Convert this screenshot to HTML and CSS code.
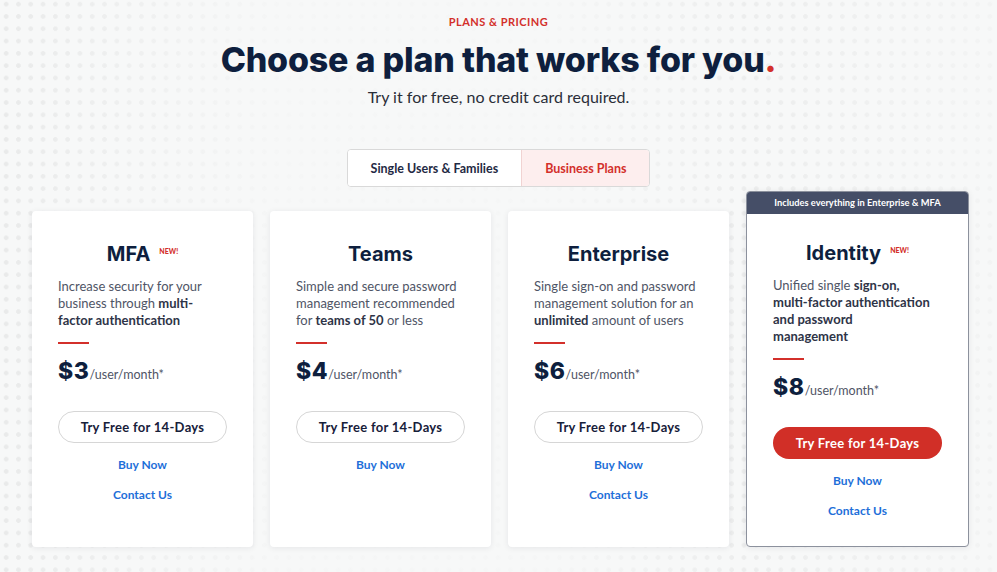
FILE: index.html
```html
<!DOCTYPE html>
<html lang="en">
<head>
<meta charset="utf-8">
<title>Plans &amp; Pricing</title>
<link rel="stylesheet" href="styles.css">
</head>
<body>
<main class="page">
  <header class="hero">
    <p class="eyebrow">PLANS &amp; PRICING</p>
    <h1 class="title">Choose a plan that works for you<span class="dot">.</span></h1>
    <p class="subtitle">Try it for free, no credit card required.</p>
    <div class="toggle">
      <button class="seg">Single Users &amp; Families</button>
      <button class="seg seg-active">Business Plans</button>
    </div>
  </header>

  <section class="plans">
    <article class="card card-plain">
      <div class="card-body">
        <div class="plan-head"><h2 class="plan-name">MFA</h2><span class="badge">NEW!</span></div>
        <p class="desc">Increase security for your<br>business through <b>multi-<br>factor authentication</b></p>
        <hr class="rule">
        <p class="price"><span class="amount">$3</span><span class="per">/user/month*</span></p>
        <a class="btn btn-outline" href="#">Try Free for 14-Days</a>
        <a class="link" href="#">Buy Now</a>
        <a class="link" href="#">Contact Us</a>
      </div>
    </article>

    <article class="card card-plain">
      <div class="card-body">
        <div class="plan-head"><h2 class="plan-name">Teams</h2></div>
        <p class="desc">Simple and secure password<br>management recommended<br>for <b>teams of 50</b> or less</p>
        <hr class="rule">
        <p class="price"><span class="amount">$4</span><span class="per">/user/month*</span></p>
        <a class="btn btn-outline" href="#">Try Free for 14-Days</a>
        <a class="link" href="#">Buy Now</a>
      </div>
    </article>

    <article class="card card-plain">
      <div class="card-body">
        <div class="plan-head"><h2 class="plan-name">Enterprise</h2></div>
        <p class="desc">Single sign-on and password<br>management solution for an<br><b>unlimited</b> amount of users</p>
        <hr class="rule">
        <p class="price"><span class="amount">$6</span><span class="per">/user/month*</span></p>
        <a class="btn btn-outline" href="#">Try Free for 14-Days</a>
        <a class="link" href="#">Buy Now</a>
        <a class="link" href="#">Contact Us</a>
      </div>
    </article>

    <article class="card card-featured">
      <div class="banner">Includes everything in Enterprise &amp; MFA</div>
      <div class="card-body">
        <div class="plan-head"><h2 class="plan-name">Identity</h2><span class="badge">NEW!</span></div>
        <p class="desc">Unified single <b>sign-on,<br>multi-factor authentication<br>and password<br>management</b></p>
        <hr class="rule">
        <p class="price"><span class="amount">$8</span><span class="per">/user/month*</span></p>
        <a class="btn btn-red" href="#">Try Free for 14-Days</a>
        <a class="link" href="#">Buy Now</a>
        <a class="link" href="#">Contact Us</a>
      </div>
    </article>
  </section>
</main>
</body>
</html>
```

FILE: styles.css
```css
* { box-sizing: border-box; }

html, body { margin: 0; padding: 0; }

body {
  width: 997px;
  height: 572px;
  overflow: hidden;
  font-family: "Lato", "Liberation Sans", sans-serif;
  color: #0f1f3d;
  background-color: #f7f8f8;
  background-image:
    linear-gradient(to right, rgba(247,248,248,0) 0%, rgba(247,248,248,0.85) 28%, rgba(247,248,248,0.85) 55%, rgba(247,248,248,0.2) 75%, rgba(247,248,248,0.7) 100%),
    radial-gradient(circle at center, #e9eaea 0, #e9eaea 2px, rgba(233,234,234,0) 2.6px);
  background-size: 100% 100%, 12.3px 12.3px;
  background-position: 0 0, 0 -2px;
}

.page {
  display: flex;
  flex-direction: column;
  padding-top: 15px;
}

.hero {
  display: flex;
  flex-direction: column;
  align-items: center;
}

.eyebrow {
  margin: 0;
  font-size: 11px;
  line-height: 14px;
  font-weight: 700;
  letter-spacing: 0.5px;
  color: #d3302b;
}

.title {
  margin: 10px 0 0;
  font-family: "Inter", "Lato", sans-serif;
  font-size: 34px;
  line-height: 42px;
  font-weight: 800;
  letter-spacing: -0.2px;
  color: #0e1f3e;
}

.dot { color: #d3302b; }

.subtitle {
  margin: 6px 0 0;
  font-size: 16px;
  line-height: 20px;
  color: #2a2e38;
}

.toggle {
  display: flex;
  margin-top: 42px;
  border: 1px solid #d9d9d9;
  border-radius: 4px;
  background: #fff;
  overflow: hidden;
}

.seg {
  height: 36px;
  padding: 0 23px;
  border: 0;
  background: #fff;
  font-family: "Lato", sans-serif;
  font-size: 12.5px;
  font-weight: 700;
  color: #1f2a44;
}

.seg-active {
  background: #fdeeee;
  color: #d3302b;
  border-left: 1px solid #f1d3d2;
}

.plans {
  display: grid;
  grid-template-columns: 221px 221px 221px 223px;
  column-gap: 17px;
  align-items: stretch;
  margin: 4px 0 0 32px;
}

.card {
  display: flex;
  flex-direction: column;
  background: #fff;
  border-radius: 4px;
}

.card-plain {
  margin-top: 20px;
  box-shadow: 0 1px 6px rgba(20, 30, 50, 0.08);
}

.card-featured {
  border: 1px solid #8c919d;
  overflow: hidden;
  box-shadow: 0 1px 6px rgba(20, 30, 50, 0.08);
}

.banner {
  height: 22px;
  background: #454e67;
  color: #fff;
  font-size: 9.3px;
  font-weight: 700;
  line-height: 22px;
  text-align: center;
}

.card-body {
  display: flex;
  flex-direction: column;
  padding: 31px 26px 28px;
}

.card-featured .card-body { padding: 27px 26px 27px; }

.plan-head {
  display: flex;
  justify-content: center;
  align-items: flex-start;
}

.plan-name {
  margin: 0;
  font-family: "Inter", "Lato", sans-serif;
  font-size: 20px;
  line-height: 24px;
  font-weight: 700;
  color: #0e1f3e;
}

.badge {
  margin: 4px 0 0 9px;
  font-size: 7px;
  line-height: 10px;
  font-weight: 900;
  color: #d3302b;
}

.desc {
  margin: 12px 0 0;
  font-size: 13px;
  line-height: 17px;
  color: #4f5566;
  white-space: nowrap;
}

.desc b {
  font-weight: 700;
  color: #2e3447;
}

.rule {
  width: 31px;
  height: 2px;
  margin: 13px 0 0;
  border: 0;
  background: #d3302b;
}

.price {
  margin: 13px 0 0;
  display: flex;
  align-items: baseline;
  line-height: 28px;
}

.amount {
  font-family: "Inter", "Lato", sans-serif;
  font-size: 23px;
  font-weight: 800;
  letter-spacing: 0.6px;
  color: #0e1f3e;
}

.per {
  font-size: 12.5px;
  color: #4f5566;
}

.btn {
  display: flex;
  align-items: center;
  justify-content: center;
  height: 32px;
  margin-top: 22px;
  border-radius: 16px;
  font-size: 13px;
  font-weight: 700;
  letter-spacing: 0.3px;
  text-decoration: none;
}

.btn-outline {
  border: 1px solid #d6d6d6;
  color: #17203a;
  background: #fff;
}

.btn-red {
  background: #d12f27;
  color: #fff;
}

.link {
  margin-top: 14px;
  font-size: 12px;
  line-height: 16px;
  font-weight: 700;
  text-align: center;
  color: #1e6fd9;
  text-decoration: none;
}
```
